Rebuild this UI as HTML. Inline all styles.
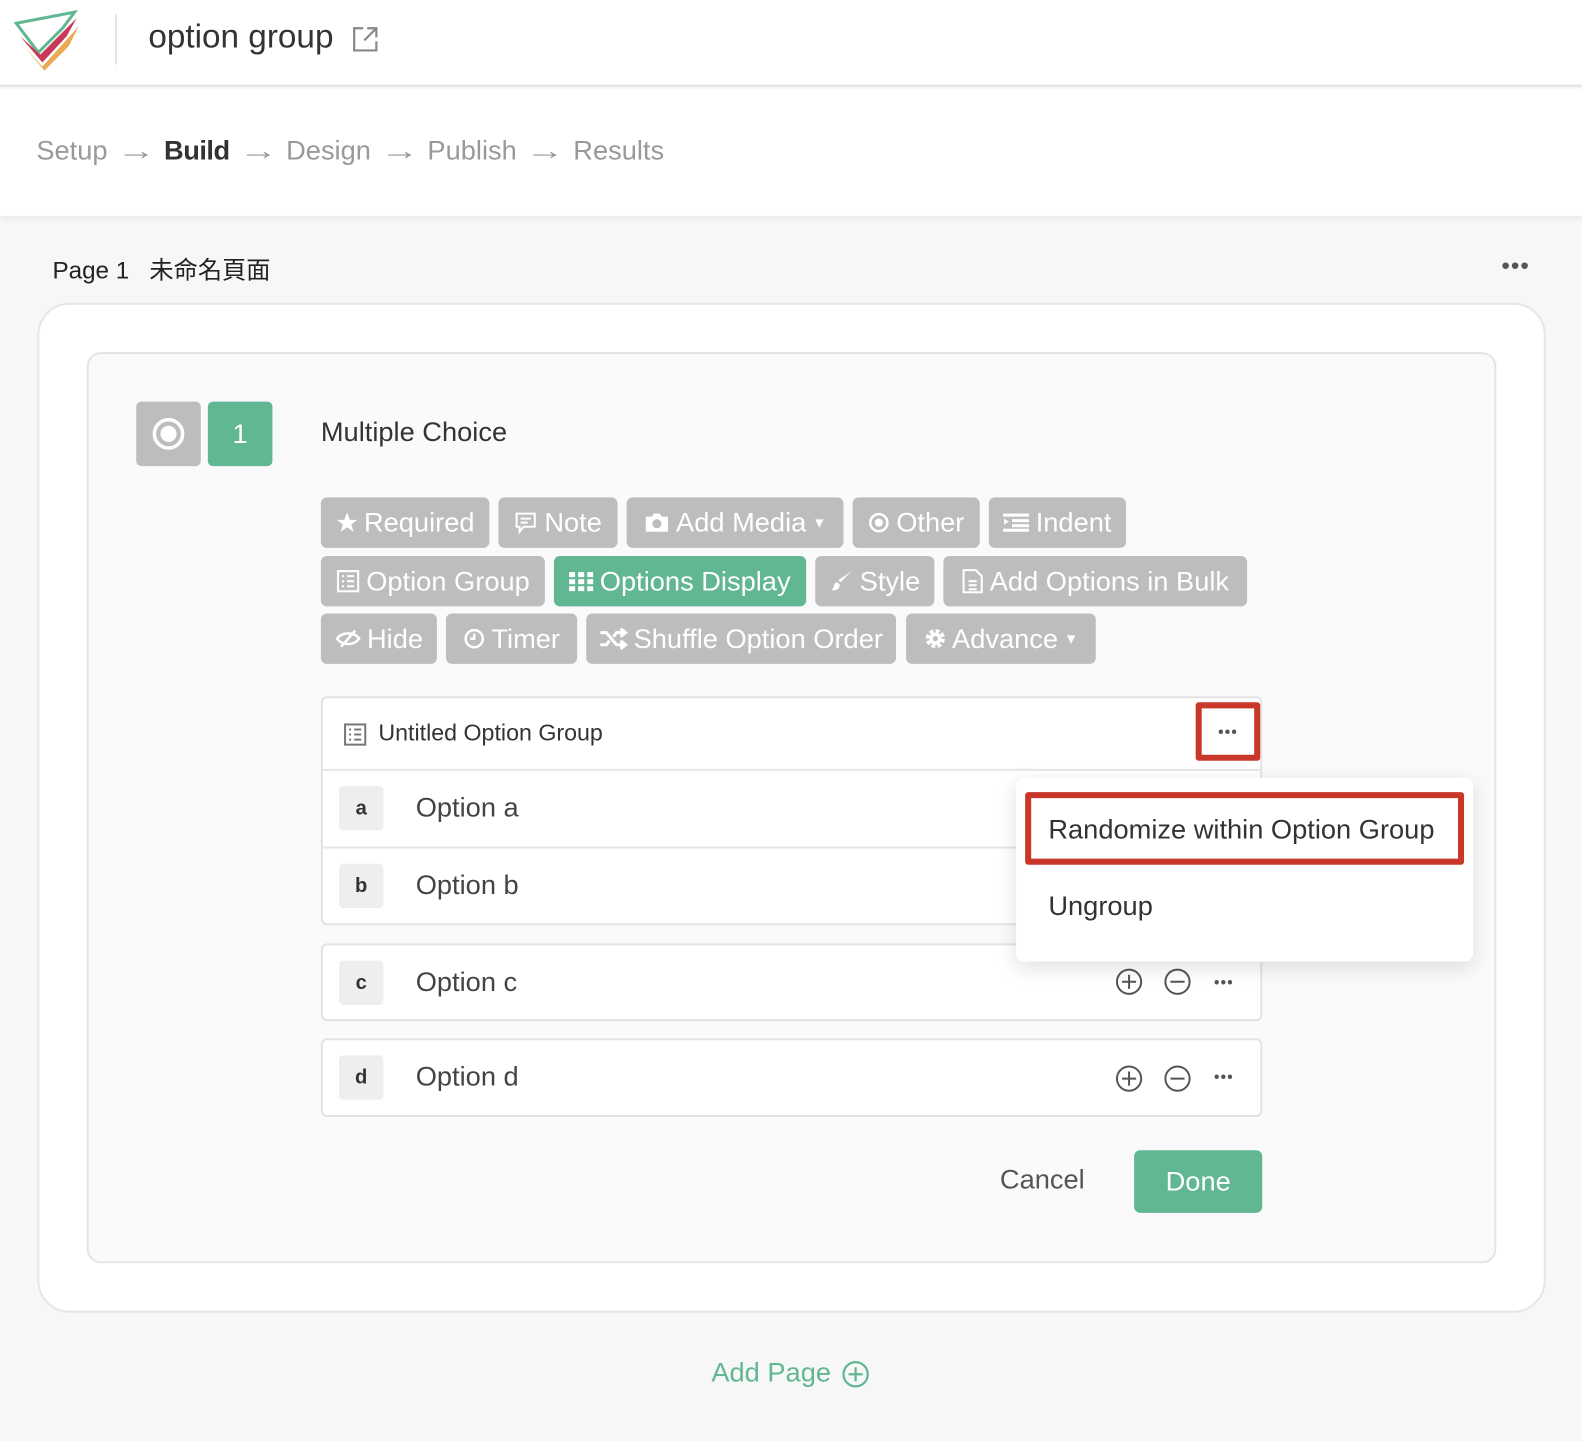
<!DOCTYPE html>
<html><head><meta charset="utf-8"><style>
*{box-sizing:border-box;margin:0;padding:0}
body{width:1582px;height:1440px;background:#f7f7f7;font-family:"Liberation Sans","Noto Sans CJK TC",sans-serif;position:relative;overflow:hidden;color:#333}
#w{position:absolute;left:0;top:0;width:1568px;height:1428px;transform:scale(1.009);transform-origin:0 0}
.a{position:absolute}
.btn{position:absolute;height:50px;background:#bdbdbd;border-radius:6px;color:#fff;font-size:27px;display:flex;align-items:center;justify-content:center;gap:6px;white-space:nowrap}
.btn svg{flex:none}
.g{background:#62b793}
.row{position:absolute;left:318px;width:933px;border:2px solid #e3e3e3;background:#fff;border-radius:6px}
.lt{position:absolute;left:16px;width:44px;height:44px;background:#eee;border-radius:4px;font-size:20px;font-weight:bold;display:flex;align-items:center;justify-content:center;color:#333}
.ot{position:absolute;left:92px;font-size:27px;color:#444}
.ar{display:inline-block;font-size:26px;transform:scaleX(1.5);margin:0 15px}
</style></head><body><div id="w">
<div class="a" style="left:0;top:0;width:1582px;height:86px;background:#fff;border-bottom:2px solid #e3e3e3"></div>
<svg class="a" style="left:14px;top:10px" width="66" height="60" viewBox="0 0 66 60">
<path d="M2 13 L60 2 L48 18 L24 42 Z" fill="none" stroke="#62b793" stroke-width="3"/>
<path d="M6 26 L26 44 L62 8 L52 26 L28 52 Z" fill="#c83a5a"/>
<path d="M10 36 L28 56 L64 16 L54 36 L30 60 Z" fill="#e8a040" opacity=".9"/>
</svg>
<div class="a" style="left:114px;top:14px;width:2px;height:50px;background:#e5e5e5"></div>
<div class="a" style="left:147px;top:17px;font-size:33px;color:#333">option group</div>
<svg class="a" style="left:349px;top:26px" width="26" height="26" viewBox="0 0 26 26" fill="none" stroke="#888" stroke-width="2.2"><path d="M11 2H2V24H24V15"/><path d="M15 2H24V11M24 2L12 14"/></svg>
<div class="a" style="left:0;top:88px;width:1582px;height:126px;background:#fff;box-shadow:0 3px 6px rgba(0,0,0,.06)"></div>
<div class="a" style="left:36px;top:134px;font-size:27px;color:#999;white-space:nowrap">Setup<span class="ar">→</span><b style="color:#333;letter-spacing:-0.5px">Build</b><span class="ar">→</span>Design<span class="ar">→</span>Publish<span class="ar">→</span>Results</div>
<div class="a" style="left:52px;top:248px;font-size:24px;color:#222">Page 1 &nbsp;&nbsp;未命名頁面</div>
<div class="a" style="left:1488px;top:250px;font-size:24px;color:#555;letter-spacing:1px">•••</div>
<div class="a" style="left:37px;top:300px;width:1495px;height:1001px;background:#fff;border:2px solid #e6e6e6;border-radius:32px"></div>
<div class="a" style="left:86px;top:349px;width:1397px;height:903px;background:#fafafa;border:2px solid #e4e4e4;border-radius:14px"></div>
<div class="a" style="left:135px;top:398px;width:64px;height:64px;background:#bdbdbd;border-radius:5px"></div>
<svg class="a" style="left:150px;top:413px" width="34" height="34"><circle cx="17" cy="17" r="14" fill="none" stroke="#fff" stroke-width="3.5"/><circle cx="17" cy="17" r="8" fill="#fff"/></svg>
<div class="a" style="left:206px;top:398px;width:64px;height:64px;background:#62b793;border-radius:5px;color:#fff;font-size:27px;display:flex;align-items:center;justify-content:center">1</div>
<div class="a" style="left:318px;top:413px;font-size:27px;color:#333">Multiple Choice</div>

<div class="btn" style="left:318px;top:493px;width:167px"><svg width="22" height="22" viewBox="0 0 24 24" fill="#fff"><path d="M12 1L15 9H23L16.5 14L19 22L12 17L5 22L7.5 14L1 9H9Z"/></svg>Required</div>
<div class="btn" style="left:494px;top:493px;width:118px"><svg width="24" height="24" viewBox="0 0 24 24" fill="none" stroke="#fff" stroke-width="2"><path d="M3 3H21V16H10L6 21V16H3Z M7 8H17M7 12H14"/></svg>Note</div>
<div class="btn" style="left:621px;top:493px;width:215px"><svg width="26" height="22" viewBox="0 0 26 22"><path d="M2 5H8L10 2H16L18 5H24V20H2Z" fill="#fff"/><circle cx="13" cy="12" r="4.5" fill="#bdbdbd"/></svg>Add Media <span style="font-size:14px">▼</span></div>
<div class="btn" style="left:845px;top:493px;width:126px"><svg width="22" height="22"><circle cx="11" cy="11" r="8.5" fill="none" stroke="#fff" stroke-width="2.5"/><circle cx="11" cy="11" r="4" fill="#fff"/></svg>Other</div>
<div class="btn" style="left:980px;top:493px;width:136px"><svg width="26" height="20" viewBox="0 0 26 20" fill="#fff"><rect x="0" y="1" width="26" height="3"/><rect x="9" y="6.5" width="17" height="3"/><rect x="9" y="11.5" width="17" height="3"/><rect x="0" y="16" width="26" height="3"/><path d="M1 6L6 9L1 12Z"/></svg>Indent</div>

<div class="btn" style="left:318px;top:551px;width:222px"><svg width="24" height="24" viewBox="0 0 24 24" fill="none" stroke="#fff" stroke-width="2"><rect x="2" y="2" width="20" height="20"/><path d="M6 7H8M11 7H18M6 12H8M11 12H18M6 17H8M11 17H18"/></svg>Option Group</div>
<div class="btn g" style="left:549px;top:551px;width:250px"><svg width="24" height="20" viewBox="0 0 24 20" fill="#fff"><rect x="0" y="1" width="6" height="5"/><rect x="9" y="1" width="6" height="5"/><rect x="18" y="1" width="6" height="5"/><rect x="0" y="8" width="6" height="5"/><rect x="9" y="8" width="6" height="5"/><rect x="18" y="8" width="6" height="5"/><rect x="0" y="15" width="6" height="5"/><rect x="9" y="15" width="6" height="5"/><rect x="18" y="15" width="6" height="5"/></svg>Options Display</div>
<div class="btn" style="left:808px;top:551px;width:118px"><svg width="24" height="24" viewBox="0 0 24 24" fill="#fff"><path d="M22 2L11 13L9 11Z"/><path d="M8 13C4 13 5 19 2 21C8 22 11 18 10 15Z"/></svg>Style</div>
<div class="btn" style="left:935px;top:551px;width:301px"><svg width="22" height="26" viewBox="0 0 22 26" fill="none" stroke="#fff" stroke-width="2"><path d="M2 2H14L20 8V24H2Z M7 13H15M7 17H15M7 21H15"/></svg>Add Options in Bulk</div>

<div class="btn" style="left:318px;top:608px;width:115px"><svg width="26" height="20" viewBox="0 0 26 20" fill="none" stroke="#fff" stroke-width="2.5"><path d="M2 10C7 3 19 3 24 10C19 17 7 17 2 10Z"/><path d="M6 18L20 2"/></svg>Hide</div>
<div class="btn" style="left:442px;top:608px;width:130px"><svg width="22" height="22" fill="none" stroke="#fff" stroke-width="2.5"><circle cx="11" cy="11" r="8.5"/><path d="M11 6V11H7"/></svg>Timer</div>
<div class="btn" style="left:581px;top:608px;width:307px"><svg width="28" height="22" viewBox="0 0 28 22" fill="none" stroke="#fff" stroke-width="3"><path d="M1 5H7L17 17H24M1 17H7L10 13M14 9L17 5H24"/><path d="M21 1L26 5L21 9M21 13L26 17L21 21" fill="#fff"/></svg>Shuffle Option Order</div>
<div class="btn" style="left:898px;top:608px;width:188px"><svg width="22" height="22" viewBox="0 0 22 22"><circle cx="11" cy="11" r="7" fill="none" stroke="#fff" stroke-width="5" stroke-dasharray="3.5 2"/><circle cx="11" cy="11" r="6" fill="#fff"/><circle cx="11" cy="11" r="2.5" fill="#bdbdbd"/></svg>Advance <span style="font-size:14px">▼</span></div>

<div class="row" style="top:690px;height:227px">
<div class="a" style="left:0;top:70px;width:929px;height:2px;background:#e6e6e6"></div>
<div class="a" style="left:0;top:147px;width:929px;height:2px;background:#e6e6e6"></div>
<svg class="a" style="left:20px;top:24px" width="24" height="24" viewBox="0 0 24 24" fill="none" stroke="#777" stroke-width="2"><rect x="2" y="2" width="20" height="20"/><path d="M6 7H8M11 7H18M6 12H8M11 12H18M6 17H8M11 17H18"/></svg>
<div class="a" style="left:55px;top:21px;font-size:23px;color:#333">Untitled Option Group</div>
<div class="lt" style="top:87px">a</div><div class="ot" style="top:93px">Option a</div>
<div class="lt" style="top:164px">b</div><div class="ot" style="top:170px">Option b</div>
</div>
<div class="a" style="left:1185px;top:696px;width:64px;height:58px;border:6px solid #c8372a;border-radius:3px;background:#fff;text-align:center;font-size:16px;line-height:50px;color:#555;letter-spacing:1px">•••</div>

<div class="row" style="top:935px;height:77px"><div class="lt" style="top:15px">c</div><div class="ot" style="top:21px">Option c</div></div>
<div class="row" style="top:1029px;height:78px"><div class="lt" style="top:15px">d</div><div class="ot" style="top:21px">Option d</div>
<svg class="a" style="left:785px;top:24px" width="28" height="28" fill="none" stroke="#555" stroke-width="2"><circle cx="14" cy="14" r="12"/><path d="M14 7V21M7 14H21"/></svg>
<svg class="a" style="left:833px;top:24px" width="28" height="28" fill="none" stroke="#555" stroke-width="2"><circle cx="14" cy="14" r="12"/><path d="M7 14H21"/></svg>
<div class="a" style="left:883px;top:29px;font-size:16px;color:#555;letter-spacing:1px">•••</div></div>
<svg class="a" style="left:1105px;top:959px" width="28" height="28" fill="none" stroke="#555" stroke-width="2"><circle cx="14" cy="14" r="12"/><path d="M14 7V21M7 14H21"/></svg>
<svg class="a" style="left:1153px;top:959px" width="28" height="28" fill="none" stroke="#555" stroke-width="2"><circle cx="14" cy="14" r="12"/><path d="M7 14H21"/></svg>
<div class="a" style="left:1203px;top:966px;font-size:16px;color:#555;letter-spacing:1px">•••</div>

<div class="a" style="left:1007px;top:771px;width:453px;height:182px;background:#fff;border-radius:8px;box-shadow:0 6px 20px rgba(0,0,0,.12)"></div>
<div class="a" style="left:1016px;top:785px;width:435px;height:72px;border:6px solid #c8372a;border-radius:3px"></div>
<div class="a" style="left:1039px;top:807px;font-size:27px;color:#333">Randomize within Option Group</div>
<div class="a" style="left:1039px;top:883px;font-size:27px;color:#333">Ungroup</div>

<div class="a" style="left:991px;top:1154px;font-size:27px;color:#555">Cancel</div>
<div class="a" style="left:1124px;top:1140px;width:127px;height:62px;background:#62b793;border-radius:6px;color:#fff;font-size:27px;display:flex;align-items:center;justify-content:center">Done</div>

<div class="a" style="left:705px;top:1345px;font-size:27px;color:#62b793">Add Page</div>
<svg class="a" style="left:834px;top:1348px" width="28" height="28" fill="none" stroke="#62b793" stroke-width="2.2"><circle cx="14" cy="14" r="12"/><path d="M14 7V21M7 14H21"/></svg>
</div></body></html>
